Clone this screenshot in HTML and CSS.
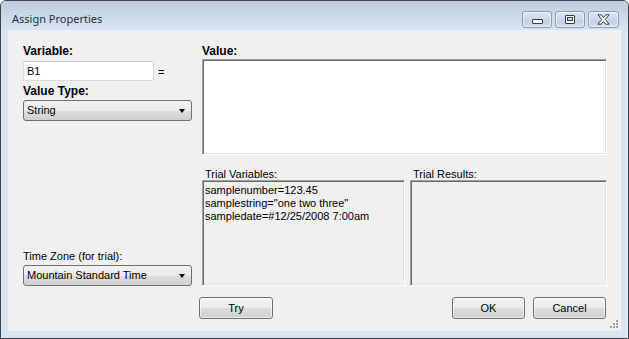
FILE: index.html
```html
<!DOCTYPE html>
<html>
<head>
<meta charset="utf-8">
<link rel="stylesheet" href="styles.css">
</head>
<body>
<div class="window">
  <div class="titlebar">
    <span class="title">Assign Properties</span>
    <div class="caption-buttons">
      <div class="cap-btn cap-min">
        <svg width="11" height="6" viewBox="0 0 11 6"><rect x="0.5" y="0.5" width="10" height="4" rx="0.5" fill="#fff" stroke="#3a3a3a"/></svg>
      </div>
      <div class="cap-btn cap-max">
        <svg width="10" height="9" viewBox="0 0 10 9"><rect x="0.5" y="0.5" width="9" height="8" rx="0.5" fill="#fff" stroke="#3a3a3a"/><rect x="2.5" y="2.5" width="5" height="3" fill="#cdd9e6" stroke="#3a3a3a"/></svg>
      </div>
      <div class="cap-btn cap-close">
        <svg width="13" height="11" viewBox="0 0 13 11"><path d="M1 0.8 H4.2 L6.5 3.6 L8.8 0.8 H12 L8.3 5.5 L12 10.2 H8.8 L6.5 7.4 L4.2 10.2 H1 L4.7 5.5 Z" fill="#fff" stroke="#3a3a3a" stroke-width="1" stroke-linejoin="round"/></svg>
      </div>
    </div>
  </div>
  <div class="client">
    <div class="main">
      <div class="left">
        <div class="blabel first">Variable:</div>
        <div class="var-row">
          <div class="textbox">B1</div>
          <span class="eq">=</span>
        </div>
        <div class="blabel second">Value Type:</div>
        <div class="combo"><span>String</span><span class="arrow"></span></div>
        <div class="tz">
          <div class="nlabel">Time Zone (for trial):</div>
          <div class="combo tzcombo"><span>Mountain Standard Time</span><span class="arrow"></span></div>
        </div>
      </div>
      <div class="right">
        <div class="blabel value-label">Value:</div>
        <div class="sunken value-box"></div>
        <div class="trial-row">
          <div class="trial trial-vars">
            <div class="nlabel tl">Trial Variables:</div>
            <div class="sunken trial-box">samplenumber=123.45<br>samplestring="one two three"<br>sampledate=#12/25/2008 7:00am</div>
          </div>
          <div class="trial trial-results">
            <div class="nlabel tl">Trial Results:</div>
            <div class="sunken trial-box"></div>
          </div>
        </div>
      </div>
    </div>
    <div class="buttons">
      <div class="btn try">Try</div>
      <div class="spacer"></div>
      <div class="btn">OK</div>
      <div class="btn">Cancel</div>
    </div>
    <svg class="grip" width="8" height="8" viewBox="0 0 8 8">
      <g fill="#a0a0a0">
        <rect x="6" y="0" width="2" height="2"/>
        <rect x="3" y="3" width="2" height="2"/><rect x="6" y="3" width="2" height="2"/>
        <rect x="0" y="6" width="2" height="2"/><rect x="3" y="6" width="2" height="2"/><rect x="6" y="6" width="2" height="2"/>
      </g>
    </svg>
  </div>
</div>
</body>
</html>
```

FILE: styles.css
```css
* { box-sizing: border-box; }
html, body { margin: 0; padding: 0; background: #ffffff; }
body {
  width: 629px;
  height: 339px;
  overflow: hidden;
  font-family: "Liberation Sans", Arial, sans-serif;
  font-size: 11px;
  color: #000;
}
.window {
  width: 629px;
  height: 339px;
  border: 1px solid #3f4246;
  border-radius: 6px 6px 0 0;
  background: #d8e4f1;
  display: flex;
  flex-direction: column;
  padding: 0 7px 7px 7px;
}
.titlebar {
  height: 29px;
  margin: 0 -7px;
  padding: 0 9px 0 11px;
  background: linear-gradient(#bccddf, #cddbea 60%, #d8e4f1);
  border-radius: 5px 5px 0 0;
  display: flex;
  align-items: flex-start;
  justify-content: space-between;
}
.title {
  font-family: "Noto Sans", "Open Sans", sans-serif;
  font-size: 11px;
  color: #1e3148;
  margin-top: 10px;
  line-height: 16px;
}
.caption-buttons {
  display: flex;
  gap: 3px;
  margin-top: 10px;
}
.cap-btn {
  width: 30px;
  height: 17px;
  border: 1px solid #8c9db2;
  border-radius: 3px;
  background: linear-gradient(#dce6f1, #cad8e8 50%, #bfd0e3 51%, #cfdcea);
  box-shadow: inset 0 0 0 1px rgba(255,255,255,0.55);
  display: flex;
  align-items: center;
  justify-content: center;
}
.cap-min svg { margin-top: 5px; }
.cap-close { width: 31px; }
.client {
  position: relative;
  flex: 1;
  background: #f0f0f0;
  display: flex;
  flex-direction: column;
  padding: 14px 14px 0 15px;
}
.main {
  display: flex;
  gap: 10px;
  height: 242px;
}
.left {
  width: 169px;
  display: flex;
  flex-direction: column;
}
.right {
  flex: 1;
  display: flex;
  flex-direction: column;
}
.blabel {
  font-size: 12px;
  font-weight: bold;
  line-height: 15px;
  height: 15px;
}
.left .first { height: 17px; }
.left .second { margin-top: 3px; height: 16px; }
.var-row {
  display: flex;
  align-items: center;
  height: 20px;
}
.textbox {
  width: 131px;
  height: 20px;
  background: #fff;
  border: 1px solid #d8dbe0;
  border-top-color: #c4c9d0;
  border-radius: 2px;
  padding: 3px 0 0 3px;
  line-height: 13px;
}
.eq { margin-left: 4px; margin-top: 2px; }
.combo {
  height: 21px;
  border: 1px solid #707070;
  border-radius: 3px;
  background: linear-gradient(#f2f2f2, #ebebeb 50%, #dddddd 51%, #cfcfcf);
  display: flex;
  align-items: center;
  justify-content: space-between;
  padding: 0 6px 0 3px;
  line-height: 13px;
}
.arrow {
  width: 0;
  height: 0;
  border-left: 3.5px solid transparent;
  border-right: 3.5px solid transparent;
  border-top: 4px solid #000;
}
.tz { margin-top: auto; }
.nlabel {
  line-height: 13px;
  height: 13px;
}
.tzcombo { margin-top: 2px; }
.sunken {
  border: 1px solid;
  border-color: #a0a0a0 #ffffff #ffffff #a0a0a0;
  box-shadow: inset 1px 1px 0 #696969, inset -1px -1px 0 #e3e3e3;
}
.value-box {
  height: 96px;
  background: #fff;
}
.trial-row {
  display: flex;
  gap: 5px;
  margin-top: 13px;
  flex: 1;
}
.trial { display: flex; flex-direction: column; }
.trial-vars { width: 203px; }
.trial-results { flex: 1; }
.tl { padding-left: 3px; height: 12px; line-height: 12px; }
.trial-box {
  flex: 1;
  background: #f0f0f0;
  padding: 3px 0 0 2px;
  line-height: 13px;
}
.buttons {
  display: flex;
  gap: 8px;
  margin-top: 11px;
  padding-left: 176px;
  padding-right: 1px;
}
.spacer { flex: 1; }
.btn {
  width: 73px;
  height: 22px;
  border: 1px solid #707070;
  border-radius: 3px;
  background: linear-gradient(#f2f2f2, #ebebeb 50%, #dddddd 51%, #cfcfcf);
  box-shadow: inset 0 0 0 1px rgba(255,255,255,0.6);
  display: flex;
  align-items: center;
  justify-content: center;
  line-height: 13px;
}
.try { width: 74px; }
.grip {
  position: absolute;
  right: 3px;
  bottom: 3px;
}
```
